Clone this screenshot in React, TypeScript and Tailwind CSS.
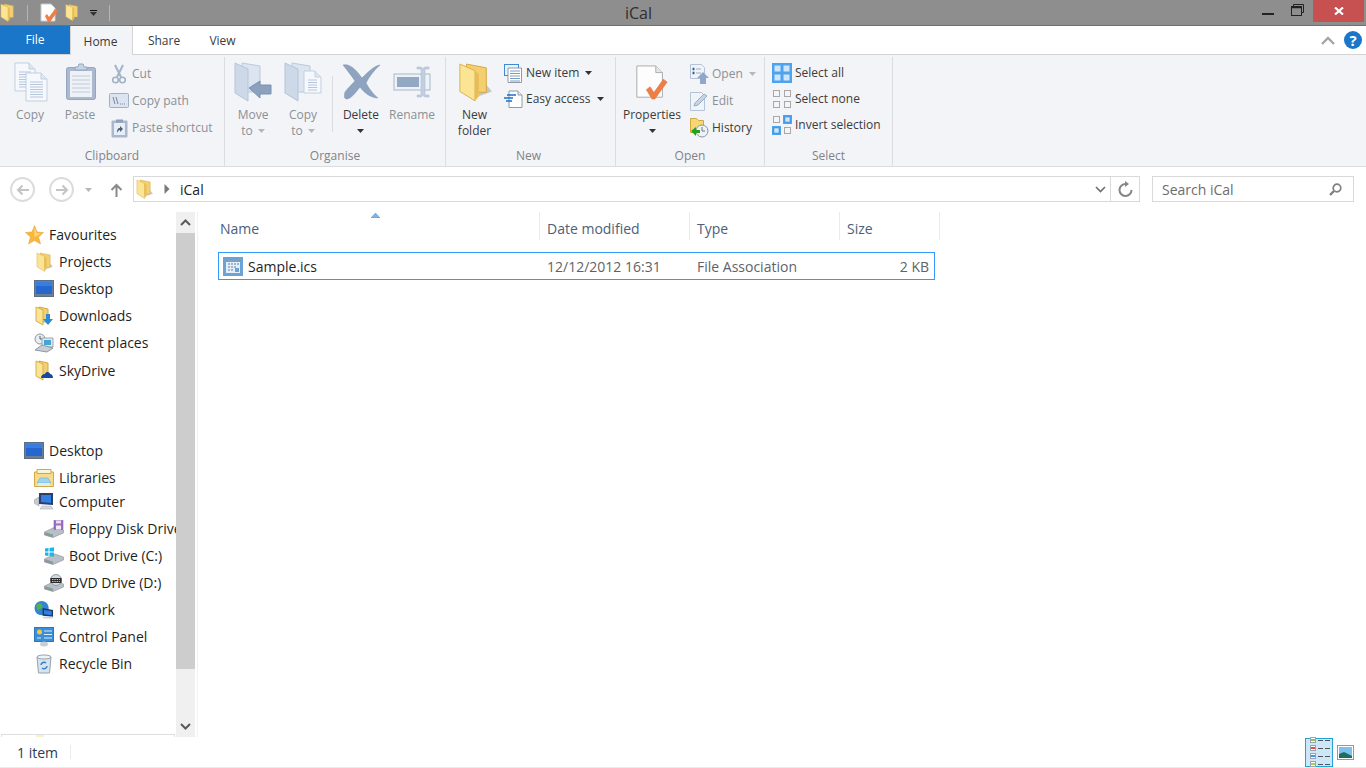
import { ReactElement, ReactNode } from "react";

const font = { fontFamily: '"Open Sans", "Noto Sans", sans-serif' };

function Folder({ w = 16, h = 20 }: { w?: number; h?: number }) {
	return (
		<svg width={w} height={h} viewBox="0 0 36 42" className="shrink-0">
			<path d="M22 36 L36 31 L30 24 L22 24z" fill="#8f8f8f" opacity="0.45" />
			<path d="M9 2 L30 6 V32 L9 32z" fill="#f3cf6f" stroke="#d3a744" />
			<path d="M2 2 L18 9 V41 L2 31z" fill="#fbe594" stroke="#d8ae4c" />
			<path d="M18 9 L22 13 V36 L18 41z" fill="#e8bd57" />
		</svg>
	);
}

function Doc({ x, y, w, h, lines = true }: { x: number; y: number; w: number; h: number; lines?: boolean }) {
	const rows = [];
	if (lines) {
		for (let ly = y + 9; ly < y + h - 2; ly += 2.5) {
			rows.push(<path key={ly} d={`M${x + 4} ${ly}h${w - 8}`} stroke="#b6c6da" strokeWidth="1" />);
		}
	}
	return (
		<g>
			<path d={`M${x} ${y}h${w - 6}l6 6v${h - 6}h-${w}z`} fill="#f5f8fc" stroke="#c3cfdf" />
			<path d={`M${x + w - 6} ${y}v6h6`} fill="#dfe7f1" stroke="#c3cfdf" />
			{rows}
		</g>
	);
}

function CopyIcon() {
	return (
		<svg width="34" height="40" viewBox="0 0 34 40" className="shrink-0 ml-[2px]">
			<Doc x={1} y={1} w={20} h={28} />
			<Doc x={12} y={11} w={21} h={28} />
		</svg>
	);
}

function PasteIcon() {
	return (
		<svg width="32" height="38" viewBox="0 0 32 38" className="shrink-0 ml-[2px]">
			<rect x="1.5" y="4.5" width="29" height="32" rx="2" fill="#aab9cf" stroke="#93a5bf" />
			<rect x="5" y="8" width="22" height="26" fill="#eef2f7" />
			<path d="M7 13h18M7 17h18M7 21h18M7 25h18M7 29h18" stroke="#bccadb" />
			<path d="M10 7 V4 H13 L14 1 H18 L19 4 H22 V7z" fill="#c9d4e3" stroke="#93a5bf" />
		</svg>
	);
}

function CutIcon() {
	return (
		<svg width="14" height="20" viewBox="0 0 14 20">
			<path d="M3 1 L9 13 M11 1 L5 13" stroke="#a3b3c9" strokeWidth="2" fill="none" />
			<circle cx="3.5" cy="16" r="2.8" fill="none" stroke="#9fb0c7" strokeWidth="1.5" />
			<circle cx="10.5" cy="16" r="2.8" fill="none" stroke="#9fb0c7" strokeWidth="1.5" />
		</svg>
	);
}

function CopyPathIcon() {
	return (
		<svg width="20" height="16" viewBox="0 0 20 16">
			<rect x="0.5" y="0.5" width="19" height="14" rx="1" fill="#dbe4f0" stroke="#9fb0c7" />
			<path d="M4 4l2 7M7 4l2 7" stroke="#77889f" />
			<path d="M11 11h1M13 11h1M15 11h1" stroke="#77889f" />
		</svg>
	);
}

function PasteShortcutIcon() {
	return (
		<svg width="17" height="20" viewBox="0 0 17 20">
			<rect x="0.5" y="2.5" width="16" height="17" rx="1" fill="#a9b8ce" />
			<rect x="3" y="5" width="11" height="12" fill="#e9eef5" />
			<path d="M5 1.5h7v3H5z" fill="#8ea1bb" />
			<path d="M6 15 C6 11 7 10 9 10 V8 L12 11 L9 14 V12 C8 12 7 13 6 15z" fill="#48607f" />
		</svg>
	);
}

function MoveToIcon() {
	return (
		<svg width="38" height="40" viewBox="0 0 38 40" className="shrink-0">
			<path d="M8 1 L26 4 V30 H8z" fill="#dbe4f0" stroke="#bccadb" />
			<path d="M1 1 L14 7 V39 L1 31z" fill="#cdd9e8" stroke="#b6c5d8" />
			<path d="M15 26 L26 19 V23 H37 V32 H26 V36z" fill="#8ba1bd" stroke="#7a92b0" />
		</svg>
	);
}

function CopyToIcon() {
	return (
		<svg width="38" height="40" viewBox="0 0 38 40" className="shrink-0">
			<path d="M8 1 L26 4 V30 H8z" fill="#dbe4f0" stroke="#bccadb" />
			<path d="M1 1 L14 7 V39 L1 31z" fill="#cdd9e8" stroke="#b6c5d8" />
			<Doc x={20} y={9} w={17} h={22} />
		</svg>
	);
}

function DeleteIcon() {
	return (
		<svg width="38" height="36" viewBox="0 0 38 36" className="shrink-0">
			<path d="M1 1 C8 -1 15 7 20 14 C26 8 32 2 38 1 C32 6 27 13 24 19 C28 26 32 31 36 34 C30 34 23 30 18 23 C14 28 10 34 5 35 C2 35 2 32 3 28 C6 24 10 20 13 17 C9 11 5 6 1 1z" fill="#8ea3bf" stroke="#7b93b1" strokeWidth="0.5" />
		</svg>
	);
}

function RenameIcon() {
	return (
		<svg width="38" height="32" viewBox="0 0 38 32" className="shrink-0">
			<rect x="1" y="8" width="36" height="16" fill="#eef2f7" stroke="#a6b7cd" />
			<rect x="4" y="11" width="22" height="10" fill="#93a8c3" />
			<path d="M24 1h4l2 1.5L32 1h4v2h-4v26h4v2h-4l-2-1.5L28 31h-4v-2h4V3h-4z" fill="#c1cfe0" stroke="#a6b7cd" strokeWidth="0.5" />
		</svg>
	);
}

function NewItemIcon() {
	return (
		<svg width="18" height="19" viewBox="0 0 18 19">
			<rect x="0.5" y="0.5" width="14" height="11" fill="#eaf3fd" stroke="#3f8ad4" />
			<path d="M4 4h13.5v14.5H4z" fill="#fff" stroke="#8f9aa7" />
			<path d="M6 7h10M6 9.5h10M6 12h10M6 14.5h10M6 17h10" stroke="#7f9cc0" />
		</svg>
	);
}

function EasyAccessIcon() {
	return (
		<svg width="20" height="18" viewBox="0 0 20 18">
			<path d="M6 1h9l4 4v12.5H6z" fill="#fff" stroke="#8f9aa7" />
			<path d="M15 1v4h4" fill="#e9edf2" stroke="#8f9aa7" />
			<path d="M4 5h9M1 8h9M3 11h6" stroke="#1a6fd0" strokeWidth="1.3" />
		</svg>
	);
}

function PropertiesIcon() {
	return (
		<svg width="34" height="36" viewBox="0 0 34 38" className="shrink-0 mt-[3px]">
			<path d="M1 1h20l7 7v26H1z" fill="#fdfdfd" stroke="#a9a9a9" />
			<path d="M21 1v7h7" fill="#e7e7e7" stroke="#a9a9a9" />
			<path d="M11 26 L15 23 L19 29 L29 15 L33 18 L20 36 L17 36z" fill="#ef7e45" stroke="#d96c35" strokeWidth="0.5" />
		</svg>
	);
}

function OpenIcon() {
	return (
		<svg width="19" height="20" viewBox="0 0 19 20">
			<path d="M0.5 0.5h11l3 3v11h-14z" fill="#f0f4f9" stroke="#b4c3d7" />
			<path d="M2.5 4h2v2h-2zM2.5 8h2v2h-2zM6 5h5M6 9h5" stroke="#98adc7" />
			<path d="M13 8 L19 14 H16 V20 H10 V14 H7z" fill="#8fa8c8" />
		</svg>
	);
}

function EditIcon() {
	return (
		<svg width="18" height="19" viewBox="0 0 18 19">
			<path d="M0.5 0.5h11l3 3v15h-14z" fill="#f0f4f9" stroke="#b4c3d7" />
			<path d="M4 14 L5 11 L14 2 L17 4 L8 13z" fill="#c6d4e6" stroke="#98adc7" />
		</svg>
	);
}

function HistoryIcon() {
	return (
		<svg width="19" height="20" viewBox="0 0 19 20">
			<path d="M0.5 0.5h6l2 2h5v12H0.5z" fill="#f6d873" stroke="#d3a744" />
			<circle cx="12" cy="13" r="6" fill="#eef1f5" stroke="#8d97a3" />
			<path d="M12 9v4h3" stroke="#6d7782" fill="none" />
			<path d="M1 13 L6 9 V12 H10 V15 H6 V18z" fill="#1fa31f" />
		</svg>
	);
}

function SelectGrid({ on }: { on: number[] }) {
	const cells = [
		[0, 0],
		[11, 0],
		[0, 11],
		[11, 11],
	];
	return (
		<svg width="20" height="20" viewBox="0 0 20 20">
			{cells.map(([x, y], i) =>
				on.includes(i) ? (
					<g key={i}>
						<rect x={x} y={y} width="9" height="9" fill="#4da3ee" />
						<rect x={x + 2} y={y + 2} width="5" height="5" fill="#cfe6fa" stroke="#2c7fcb" strokeWidth="0.5" />
					</g>
				) : (
					<rect key={i} x={x + 1.5} y={y + 1.5} width="6" height="6" fill="#f5f5f5" stroke="#a8a8a8" />
				),
			)}
		</svg>
	);
}

function SelectAllIcon() {
	return (
		<svg width="20" height="20" viewBox="0 0 20 20">
			<rect width="20" height="20" fill="#4da3ee" />
			<rect x="2.5" y="2.5" width="6" height="6" fill="#cfe6fa" />
			<rect x="11.5" y="2.5" width="6" height="6" fill="#cfe6fa" />
			<rect x="2.5" y="11.5" width="6" height="6" fill="#cfe6fa" />
			<rect x="11.5" y="11.5" width="6" height="6" fill="#cfe6fa" />
		</svg>
	);
}

function Monitor() {
	return (
		<svg width="20" height="17" viewBox="0 0 20 17">
			<rect x="0.5" y="0.5" width="19" height="16" fill="#6d7d92" stroke="#5d6d82" />
			<rect x="2" y="2" width="16" height="12" fill="#2467cf" />
			<path d="M2 2h16v4H2z" fill="#3f8ae8" opacity="0.7" />
		</svg>
	);
}

function Star() {
	return (
		<svg width="19" height="20" viewBox="0 0 19 20">
			<path d="M9.5 0.5 L12 7 L18.5 7.5 L13.5 12 L15.5 19 L9.5 15.5 L3.5 19 L5.5 12 L0.5 7.5 L7 7z" fill="#fbb73c" stroke="#e59a2e" strokeWidth="0.5" />
			<path d="M9.5 2 L11.5 8 L16 8.5 L9.5 12z" fill="#fdd985" />
		</svg>
	);
}

function DownloadsIcon() {
	return (
		<svg width="18" height="20" viewBox="0 0 18 20">
			<path d="M4 1 L13 3 V16 H4z" fill="#f3cf6f" stroke="#d3a744" />
			<path d="M1 1 L8 4 V19 L1 15z" fill="#fbe594" stroke="#d8ae4c" />
			<path d="M11 8h4v5h3l-5 6-5-6h3z" fill="#2a8bd8" />
		</svg>
	);
}

function RecentIcon() {
	return (
		<svg width="20" height="20" viewBox="0 0 20 20">
			<circle cx="6" cy="6" r="5" fill="#e8edf2" stroke="#8d97a3" />
			<path d="M6 3v3h3" stroke="#57606b" fill="none" />
			<path d="M8 5h11v9H8z" fill="#e4e8ed" stroke="#9aa4af" />
			<path d="M10 7h7v5h-7z" fill="#3fa7d8" />
			<path d="M1 17 L8 12 L19 15 L13 19z" fill="#c8cdd3" stroke="#8d97a3" />
		</svg>
	);
}

function SkyDriveIcon() {
	return (
		<svg width="18" height="21" viewBox="0 0 18 21">
			<path d="M4 1 L13 3 V16 H4z" fill="#f3cf6f" stroke="#d3a744" />
			<path d="M1 1 L8 4 V20 L1 16z" fill="#fbe594" stroke="#d8ae4c" />
			<path d="M6 18 C6 15 8 14 10 14 C11 11 15 12 15 14 C17 14 18 16 18 18z" fill="#17479e" />
		</svg>
	);
}

function LibrariesIcon() {
	return (
		<svg width="20" height="18" viewBox="0 0 20 18">
			<path d="M0.5 3h19v14.5H0.5z" fill="#f6dc8a" stroke="#d3a744" />
			<path d="M3 0.5h14v4H3z" fill="#fbf3d5" stroke="#d3a744" />
			<path d="M6 9h8l3 5H3z" fill="#9fd3ef" stroke="#5ba6d2" strokeWidth="0.5" />
			<path d="M4 14h12v3H4z" fill="#d8eef9" />
		</svg>
	);
}

function ComputerIcon() {
	return (
		<svg width="20" height="18" viewBox="0 0 20 18">
			<path d="M0 8 L5 5 V14 L0 11z" fill="#c6ccd3" stroke="#8d97a3" strokeWidth="0.5" />
			<path d="M5 1 L19 1 V13 L5 12z" fill="#2d3f66" />
			<path d="M7 3 L17 3 V11 L7 10z" fill="#2f7fe6" />
			<path d="M8 14h9l2 3H6z" fill="#d6dade" stroke="#9aa4af" strokeWidth="0.5" />
		</svg>
	);
}

function Drive({ kind }: { kind: "floppy" | "boot" | "dvd" }) {
	return (
		<svg width="20" height="18" viewBox="0 0 20 18">
			<path d="M0.5 12 L11 7 L19.5 10 V13 L9 17.5 L0.5 15z" fill="#b9bfc6" stroke="#7c858f" strokeWidth="0.5" />
			<path d="M0.5 12 L9 14.5 V17.5 L0.5 15z" fill="#8f98a2" />
			<path d="M3 14 L4.5 14.5" stroke="#3fd04a" strokeWidth="1.2" />
			{kind === "floppy" && (
				<g>
					<rect x="10" y="0.5" width="9" height="9" fill="#9b6fc4" stroke="#7a52a3" strokeWidth="0.5" />
					<rect x="12" y="0.5" width="5" height="3" fill="#e6dcf0" />
					<rect x="12" y="5.5" width="5" height="4" fill="#f2eef7" />
				</g>
			)}
			{kind === "boot" && (
				<g fill="#19b5ee">
					<path d="M1 1.5 L4.5 1 V4.5 H1zM5.5 1 L10 0.3 V4.5 H5.5zM1 5.5 H4.5 V9 L1 8.5zM5.5 5.5 H10 V9.7 L5.5 9z" />
				</g>
			)}
			{kind === "dvd" && (
				<g>
					<circle cx="12" cy="6" r="5.5" fill="#d7dbe0" stroke="#8d97a3" />
					<rect x="6.5" y="4" width="11" height="5" fill="#2b2b2b" />
					<path d="M8 5.5h8M8 7.5h8" stroke="#dfe3e7" strokeWidth="0.8" strokeDasharray="1.5 0.8" />
				</g>
			)}
		</svg>
	);
}

function NetworkIcon() {
	return (
		<svg width="21" height="20" viewBox="0 0 21 20">
			<circle cx="8" cy="8" r="7.5" fill="#2f86d6" />
			<path d="M3 4 C6 2 9 3 9 6 C9 9 5 8 5 11 C3 10 2 7 3 4z" fill="#53b04b" />
			<path d="M9 8 L20 10 V17 L9 16z" fill="#24375f" />
			<path d="M10.5 10 L18.5 11 V15.5 L10.5 14.5z" fill="#2f7fe6" />
			<path d="M9 17h10l1 2H10z" fill="#d0d4d9" />
		</svg>
	);
}

function ControlPanelIcon() {
	return (
		<svg width="20" height="20" viewBox="0 0 20 20">
			<rect x="0.5" y="0.5" width="19" height="14" fill="#3b8fd8" stroke="#2a78bf" />
			<circle cx="5.5" cy="5" r="2.5" fill="#f7c542" />
			<path d="M10 4h8M10 7.5h8M10 11h8M3 11h4" stroke="#d8ecfa" strokeWidth="1.2" />
			<ellipse cx="10" cy="17" rx="4" ry="2.5" fill="#c9ced4" />
		</svg>
	);
}

function RecycleIcon() {
	return (
		<svg width="16" height="20" viewBox="0 0 16 20">
			<path d="M1 3h14l-1.5 16h-11z" fill="#d6e4ee" stroke="#93a3b0" />
			<ellipse cx="8" cy="3" rx="7" ry="2" fill="#eef3f7" stroke="#93a3b0" />
			<path d="M5 11a3 3 0 0 1 5-2M11 12a3 3 0 0 1-5 2" stroke="#3a7fc4" strokeWidth="1.5" fill="none" />
		</svg>
	);
}

function IcsIcon() {
	return (
		<svg width="20" height="19" viewBox="0 0 20 19">
			<rect width="20" height="19" fill="#6ba3d6" />
			<rect x="3" y="3" width="14" height="13" fill="#e6eff8" />
			<path d="M3 3h14v2H3z" fill="#7f9fc4" />
			<path d="M5 6h2v2H5zM8 6h2v2H8zM11 6h2v2h-2zM14 6h2v2h-2zM5 9h2v2H5zM8 9h2v2H8zM11 9h2v2h-2zM5 12h2v2H5zM8 12h2v2H8z" fill="#9db8d6" />
			<path d="M12 11h4v4h-4z" fill="#6ba3d6" />
		</svg>
	);
}

function Caret({ dark = false }: { dark?: boolean }) {
	return (
		<svg width="7" height="4" viewBox="0 0 7 4" className="shrink-0">
			<path d="M0 0h7L3.5 4z" fill={dark ? "#333333" : "#b4b8bd"} />
		</svg>
	);
}

function BigButton({ icon, lines, dim, caret, w }: { icon: ReactElement; lines: string[]; dim?: boolean; caret?: "light" | "below"; w: number }) {
	return (
		<div className="flex flex-col items-center shrink-0" style={{ width: w }}>
			<div className="flex items-center justify-center h-[39px] shrink-0">{icon}</div>
			<div className={`flex flex-col items-center text-[12px] leading-[16px] mt-[6px] shrink-0 ${dim ? "text-[#8b9096]" : "text-[#3b3b3b]"}`}>
				{lines.map((l, i) => (
					<div key={l} className="flex items-center gap-[5px] whitespace-nowrap">
						{l}
						{caret === "light" && i === lines.length - 1 && <Caret />}
					</div>
				))}
				{caret === "below" && (
					<div className="h-[16px] flex items-center">
						<Caret dark />
					</div>
				)}
			</div>
		</div>
	);
}

function SmallButton({ icon, label, dim, caret }: { icon: ReactElement; label: string; dim?: boolean; caret?: "dark" | "light" }) {
	return (
		<div className={`h-[18px] flex items-center text-[12px] whitespace-nowrap ${dim ? "text-[#8b9096]" : "text-[#3b3b3b]"}`}>
			<div className="w-[20px] flex items-center justify-center shrink-0">{icon}</div>
			<span className="ml-[3px]">{label}</span>
			{caret && (
				<span className="ml-[6px]">
					<Caret dark={caret === "dark"} />
				</span>
			)}
		</div>
	);
}

function Group({ label, width, labelClass = "", children }: { label: string; width: number; labelClass?: string; children: ReactNode }) {
	return (
		<div className="flex flex-col shrink-0 h-full border-r border-[#dcdde0]" style={{ width }}>
			<div className="flex flex-1 min-h-0">{children}</div>
			<div className={`h-[21px] flex items-center justify-center text-[12px] text-[#7f8388] ${labelClass}`}>{label}</div>
		</div>
	);
}

function Ribbon() {
	return (
		<div className="h-[112px] bg-[#f3f4f7] border-b border-[#dcdcdc] flex pt-[2px] shrink-0">
			<Group label="Clipboard" width={225}>
				<div className="flex pt-[5px] pl-[8px]">
					<BigButton w={44} icon={<CopyIcon />} lines={["Copy"]} dim />
					<div className="w-[6px]" />
					<BigButton w={44} icon={<PasteIcon />} lines={["Paste"]} dim />
					<div className="flex flex-col pl-[7px] gap-[9px] pt-[3px]">
						<SmallButton icon={<CutIcon />} label="Cut" dim />
						<SmallButton icon={<CopyPathIcon />} label="Copy path" dim />
						<SmallButton icon={<PasteShortcutIcon />} label="Paste shortcut" dim />
					</div>
				</div>
			</Group>
			<Group label="Organise" width={221}>
				<div className="flex pt-[5px] pl-[3px]">
					<BigButton w={50} icon={<MoveToIcon />} lines={["Move", "to"]} dim caret="light" />
					<BigButton w={50} icon={<CopyToIcon />} lines={["Copy", "to"]} dim caret="light" />
					<div className="w-px h-[56px] bg-[#dcdde0] mt-[14px] ml-[4px] mr-[3px]" />
					<BigButton w={50} icon={<DeleteIcon />} lines={["Delete"]} caret="below" />
					<BigButton w={52} icon={<RenameIcon />} lines={["Rename"]} dim />
				</div>
			</Group>
			<Group label="New" width={170} labelClass="pr-[4px]">
				<div className="flex pt-[5px] pl-[4px]">
					<BigButton w={49} icon={<Folder w={34} h={40} />} lines={["New", "folder"]} />
					<div className="flex flex-col pl-[4px] pt-[2px] gap-[8px]">
						<SmallButton icon={<NewItemIcon />} label="New item" caret="dark" />
						<SmallButton icon={<EasyAccessIcon />} label="Easy access" caret="dark" />
					</div>
				</div>
			</Group>
			<Group label="Open" width={149}>
				<div className="flex pt-[5px] pl-[2px]">
					<BigButton w={68} icon={<PropertiesIcon />} lines={["Properties"]} caret="below" />
					<div className="flex flex-col pl-[3px] gap-[9px] pt-[3px]">
						<SmallButton icon={<OpenIcon />} label="Open" dim caret="light" />
						<SmallButton icon={<EditIcon />} label="Edit" dim />
						<SmallButton icon={<HistoryIcon />} label="History" />
					</div>
				</div>
			</Group>
			<Group label="Select" width={128}>
				<div className="flex flex-col pl-[7px] pt-[7px] gap-[8px]">
					<SmallButton icon={<SelectAllIcon />} label="Select all" />
					<SmallButton icon={<SelectGrid on={[]} />} label="Select none" />
					<SmallButton icon={<SelectGrid on={[1, 2]} />} label="Invert selection" />
				</div>
			</Group>
		</div>
	);
}

function TitleBar() {
	return (
		<div className="h-[26px] bg-[#8e8e8e] border-b border-[#6f6f6f] flex items-start shrink-0">
			<div className="flex items-center h-[25px] w-[120px] shrink-0">
				<Folder w={16} h={19} />
				<div className="w-px h-[16px] bg-[#b5b5b5] ml-[11px]" />
				<div className="ml-[12px]">
					<svg width="18" height="20" viewBox="0 0 18 20">
						<path d="M1 1h10l4 4v13H1z" fill="#fff" stroke="#c9c9c9" />
						<path d="M5 13 L7 11 L9 14 L15 6 L18 8 L10 19 L8 19z" fill="#ef7e45" />
					</svg>
				</div>
				<div className="ml-[7px]"><Folder w={15} h={19} /></div>
				<div className="ml-[10px] flex flex-col items-center gap-[1px]">
					<div className="w-[7px] h-px bg-[#111]" />
					<Caret dark />
				</div>
				<div className="w-px h-[16px] bg-[#b5b5b5] ml-[12px]" />
			</div>
			<div className="flex-1 h-[25px] flex items-center justify-center text-[16px] text-[#2f2f2f] pr-[105px]">iCal</div>
			<div className="flex items-start shrink-0 w-[104px]">
				<div className="w-[12px] h-[2px] bg-[#222] mt-[13px]" />
				<div className="ml-[17px] mt-[4px]">
					<svg width="13" height="12" viewBox="0 0 13 12">
						<path d="M2.5 2.5V0.5h10v8h-2" fill="none" stroke="#222" />
						<rect x="0.5" y="2.5" width="10" height="9" fill="none" stroke="#222" />
						<path d="M0.5 3.5h10" stroke="#222" strokeWidth="1.5" />
					</svg>
				</div>
				<div className="ml-[9px] w-[51px] h-[22px] bg-[#c75050] flex items-center justify-center">
					<svg width="10" height="8" viewBox="0 0 10 8">
						<path d="M1 0.5 L9 7.5M9 0.5 L1 7.5" stroke="#fff" strokeWidth="2.2" />
					</svg>
				</div>
			</div>
		</div>
	);
}

function TabBar() {
	return (
		<div className="h-[29px] bg-white border-b border-[#d4d4d4] flex shrink-0 text-[12px] text-[#3b3b3b]">
			<div className="w-[70px] h-[28px] bg-[#1a76c9] text-white flex items-center justify-center">File</div>
			<div className="w-[63px] h-[29px] bg-[#f3f4f7] border-x border-[#d4d4d4] flex items-center justify-center pt-[2px] pr-[2px]">Home</div>
			<div className="w-[62px] flex items-center justify-center pt-[2px]">Share</div>
			<div className="w-[55px] flex items-center justify-center pt-[2px]">View</div>
			<div className="flex-1" />
			<div className="flex items-center pr-[4px]">
				<svg width="14" height="9" viewBox="0 0 14 9">
					<path d="M1 8 L7 2 L13 8" stroke="#a5a5a5" strokeWidth="2.4" fill="none" />
				</svg>
				<div className="ml-[9px] w-[18px] h-[18px] rounded-full bg-[#1a76c9] text-white font-bold text-[15px] flex items-center justify-center">?</div>
			</div>
		</div>
	);
}

function NavCircle({ dir }: { dir: "left" | "right" }) {
	return (
		<div className="w-[25px] h-[25px] rounded-full border-2 border-[#dcdcdc] bg-white flex items-center justify-center shrink-0">
			<svg width="14" height="12" viewBox="0 0 14 12">
				<path d={dir === "left" ? "M13 6H2M6.5 1.5 L2 6 L6.5 10.5" : "M1 6H12M7.5 1.5 L12 6 L7.5 10.5"} stroke="#c4c4c4" strokeWidth="2" fill="none" />
			</svg>
		</div>
	);
}

function AddressBar() {
	return (
		<div className="h-[45px] flex items-start pt-[9px] shrink-0 bg-white">
			<div className="ml-[10px] mt-[1px]"><NavCircle dir="left" /></div>
			<div className="ml-[14px] mt-[1px]"><NavCircle dir="right" /></div>
			<div className="ml-[11px] mt-[12px]"><Caret /></div>
			<svg width="13" height="15" viewBox="0 0 13 15" className="ml-[18px] mt-[7px] shrink-0">
				<path d="M6.5 14V2M1.5 7 L6.5 2 L11.5 7" stroke="#8a8a8a" strokeWidth="2" fill="none" />
			</svg>
			<div className="ml-[10px] w-[1007px] h-[26px] border border-[#d9d9d9] flex items-center shrink-0">
				<div className="ml-[2px]"><Folder w={17} h={20} /></div>
				<svg width="6" height="10" viewBox="0 0 6 10" className="ml-[11px]"><path d="M0.5 0 L5.5 5 L0.5 10z" fill="#7a7a7a" /></svg>
				<span className="ml-[10px] text-[14px] text-[#222]">iCal</span>
				<div className="flex-1" />
				<svg width="11" height="7" viewBox="0 0 11 7"><path d="M1 1 L5.5 5.5 L10 1" stroke="#6f6f6f" strokeWidth="1.6" fill="none" /></svg>
				<div className="w-px h-full bg-[#d9d9d9] ml-[4px]" />
				<div className="w-[28px] flex items-center justify-center">
					<svg width="15" height="16" viewBox="0 0 15 16">
						<path d="M8 3 A6 6 0 1 0 13.5 9" stroke="#858585" strokeWidth="2" fill="none" />
						<path d="M7 0 L11 3 L7 6z" fill="#858585" />
					</svg>
				</div>
			</div>
			<div className="ml-[12px] w-[202px] h-[26px] border border-[#d9d9d9] flex items-center shrink-0">
				<span className="ml-[9px] text-[14px] text-[#6d6d6d]">Search iCal</span>
				<div className="flex-1" />
				<svg width="13" height="13" viewBox="0 0 13 13" className="mr-[11px]">
					<circle cx="8" cy="5" r="3.8" fill="none" stroke="#808080" strokeWidth="1.7" />
					<path d="M5 8 L1 12" stroke="#808080" strokeWidth="2.4" />
				</svg>
			</div>
		</div>
	);
}

function NavRow({ icon, label, indent, h = 27 }: { icon: ReactElement; label: string; indent: number; h?: number }) {
	return (
		<div className="flex items-center whitespace-nowrap text-[14px] text-[#1e1e1e]" style={{ height: h, paddingLeft: indent }}>
			<div className="w-[20px] flex items-center justify-center shrink-0">{icon}</div>
			<span className="ml-[5px]">{label}</span>
		</div>
	);
}

function Sidebar() {
	return (
		<div className="w-[176px] h-full flex flex-col shrink-0 overflow-hidden">
			<div className="flex-1 min-h-0 pt-[9px]">
				<NavRow indent={24} icon={<Star />} label="Favourites" />
				<NavRow indent={34} icon={<Folder w={17} h={20} />} label="Projects" />
				<NavRow indent={34} icon={<Monitor />} label="Desktop" />
				<NavRow indent={34} icon={<DownloadsIcon />} label="Downloads" />
				<NavRow indent={34} icon={<RecentIcon />} label="Recent places" />
				<NavRow indent={34} h={28} icon={<SkyDriveIcon />} label="SkyDrive" />
				<div className="h-[53px]" />
				<NavRow indent={24} icon={<Monitor />} label="Desktop" />
				<NavRow indent={34} icon={<LibrariesIcon />} label="Libraries" />
				<NavRow indent={34} h={20} icon={<ComputerIcon />} label="Computer" />
				<div className="h-[4px]" />
				<NavRow indent={44} icon={<Drive kind="floppy" />} label="Floppy Disk Drive (A:)" />
				<NavRow indent={44} icon={<Drive kind="boot" />} label="Boot Drive (C:)" />
				<NavRow indent={44} icon={<Drive kind="dvd" />} label="DVD Drive (D:)" />
				<NavRow indent={34} icon={<NetworkIcon />} label="Network" />
				<NavRow indent={34} icon={<ControlPanelIcon />} label="Control Panel" />
				<NavRow indent={34} icon={<RecycleIcon />} label="Recycle Bin" />
			</div>
			<div className="h-[3px] mx-px border-t border-x border-[#dedede] shrink-0 flex justify-start">
				<div className="ml-[34px] w-[8px] h-[2px] bg-[#f7f3c8]" />
			</div>
		</div>
	);
}

function Scrollbar() {
	return (
		<div className="w-[19px] h-full bg-[#f0f0f0] flex flex-col shrink-0">
			<div className="h-[21px] flex items-center justify-center">
				<svg width="11" height="7" viewBox="0 0 11 7"><path d="M1 6 L5.5 1.5 L10 6" stroke="#5a5a5a" strokeWidth="2" fill="none" /></svg>
			</div>
			<div className="h-[436px] bg-[#cdcdcd]" />
			<div className="flex-1 flex items-end justify-center pb-[7px]">
				<svg width="11" height="7" viewBox="0 0 11 7"><path d="M1 1 L5.5 5.5 L10 1" stroke="#5a5a5a" strokeWidth="2" fill="none" /></svg>
			</div>
		</div>
	);
}

function HeaderCell({ label, width }: { label: string; width: number }) {
	return (
		<div className="h-[28px] flex items-center pl-[7px] border-r border-[#e7ebf0] shrink-0 text-[14px] text-[#4c607a] pt-[4px]" style={{ width }}>
			{label}
		</div>
	);
}

function FileList() {
	return (
		<div className="flex-1 h-full ml-[2px] border-l border-[#f1f1f1] pl-[20px]">
			<div className="relative flex h-[28px]">
				<div className="h-[28px] flex items-center pl-[2px] border-r border-[#e7ebf0] shrink-0 text-[14px] text-[#4c607a] pt-[4px] w-[322px]">
					Name
				</div>
				<HeaderCell label="Date modified" width={150} />
				<HeaderCell label="Type" width={150} />
				<HeaderCell label="Size" width={100} />
				<svg width="9" height="5" viewBox="0 0 9 5" className="absolute left-[153px] top-[1px]">
					<path d="M0 5 L4.5 0 L9 5z" fill="#7db4e0" stroke="#4a87bb" strokeWidth="0.5" />
				</svg>
			</div>
			<div className="mt-[12px] w-[717px] h-[28px] border border-[#3399ff] flex items-center text-[14px]">
				<div className="ml-[4px]"><IcsIcon /></div>
				<span className="ml-[5px] w-[299px] text-[#1e1e1e]">Sample.ics</span>
				<span className="w-[150px] text-[#5f6368]">12/12/2012 16:31</span>
				<span className="flex-1 text-[#5f6368]">File Association</span>
				<span className="mr-[5px] text-[#5f6368]">2 KB</span>
			</div>
		</div>
	);
}

function StatusBar() {
	return (
		<div className="h-[31px] flex items-center border-b border-[#ececec] bg-white shrink-0">
			<span className="ml-[17px] text-[14px] text-[#263c5c]">1 item</span>
			<div className="w-px h-[14px] bg-[#ececec] ml-[12px]" />
			<div className="flex-1" />
			<div className="w-[28px] h-[29px] bg-[#cce8f8] border border-[#26a0da] flex flex-col justify-center gap-[2px] pl-[4px]">
				{["#8fbf5a", "#e04a4a", "#4a8fe0", "#b4c84a"].map((c) => (
					<div key={c} className="flex items-center gap-[2px]">
						<div className="w-[6px] h-[6px] border border-[#9aa4af] bg-white flex items-center justify-center">
							<div className="w-[4px] h-[2px]" style={{ background: c }} />
						</div>
						<div className="w-[5px] h-px bg-[#555]" />
						<div className="w-[5px] h-px bg-[#555]" />
					</div>
				))}
			</div>
			<div className="ml-[4px] mr-[12px]">
				<svg width="17" height="15" viewBox="0 0 17 15">
					<rect x="0.5" y="0.5" width="16" height="14" fill="#fff" stroke="#8f99a6" />
					<rect x="2" y="2" width="13" height="11" fill="#7cc2ec" />
					<path d="M2 13 V9 L7 7 L15 11 V13z" fill="#1f6d5c" />
				</svg>
			</div>
		</div>
	);
}

export default function App() {
	return (
		<div className="w-[1366px] h-[768px] bg-white flex flex-col overflow-hidden" style={font}>
			<TitleBar />
			<TabBar />
			<Ribbon />
			<AddressBar />
			<div className="flex flex-1 min-h-0">
				<Sidebar />
				<Scrollbar />
				<FileList />
			</div>
			<StatusBar />
		</div>
	);
}
